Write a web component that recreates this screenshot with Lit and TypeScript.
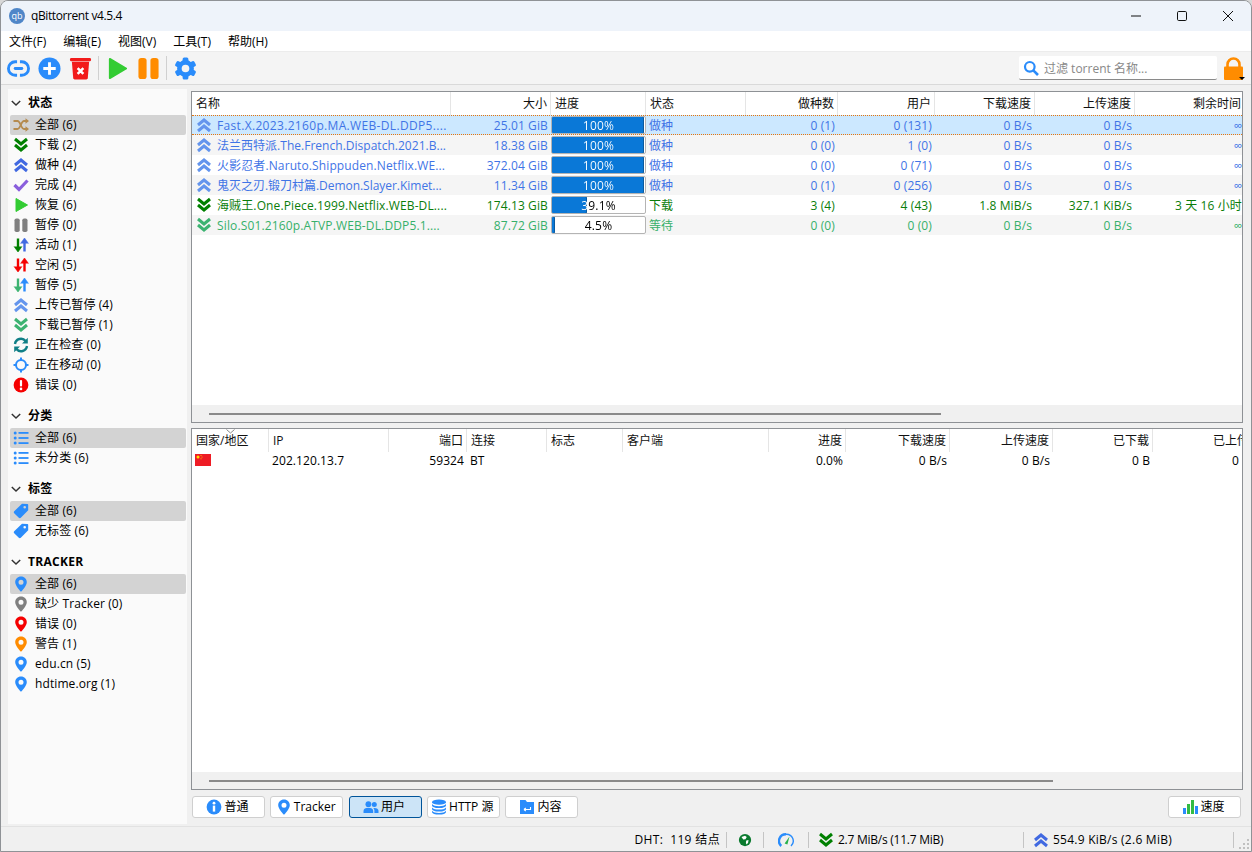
import { LitElement, html, css, svg } from "lit";
import { customElement } from "lit/decorators.js";

const B = "#2a8cfb", RB = "#4169e1", CB = "#6495ed", G = "#008000", MG = "#3cb371", R = "#f50000", O = "#ff8c00";

function ic(body: any, size = 16, vb = 16) {
  return html`<svg class="ic" width=${size} height=${size} viewBox="0 0 ${vb} ${vb}">${body}</svg>`;
}
const chev = (c: string, up: boolean) => up
  ? svg`<path d="M2 8 8 3 14 8M2 14 8 9 14 14" fill="none" stroke=${c} stroke-width="3"/>`
  : svg`<path d="M2 2 8 7 14 2M2 8 8 13 14 8" fill="none" stroke=${c} stroke-width="3"/>`;
const arrows = (d: string, u: string) => svg`
  <path d="M5 1.5V13" stroke=${d} stroke-width="2.4" fill="none"/><path d="M1 9.5 5 15 9 9.5" fill=${d} stroke=${d} stroke-width=".6"/>
  <path d="M11.5 14.5V3" stroke=${u} stroke-width="2.4" fill="none"/><path d="M7.5 6.5 11.5 1 15.5 6.5" fill=${u} stroke=${u} stroke-width=".6"/>`;
const pin = (c: string) => svg`<path fill-rule="evenodd" fill=${c} d="M8 .5C4.6.5 2.2 3 2.2 6.2 2.2 10 8 15.8 8 15.8S13.8 10 13.8 6.2C13.8 3 11.4.5 8 .5ZM8 3.7A2.5 2.5 0 1 1 8 8.7 2.5 2.5 0 0 1 8 3.7Z"/>`;
const list = svg`<g fill=${B}><circle cx="2.2" cy="3" r="1.5"/><circle cx="2.2" cy="8" r="1.5"/><circle cx="2.2" cy="13" r="1.5"/><rect x="5.5" y="2" width="10" height="1.8"/><rect x="5.5" y="7.1" width="10" height="1.8"/><rect x="5.5" y="12.2" width="10" height="1.8"/></g>`;
const tag = svg`<path fill-rule="evenodd" fill=${B} d="M9 .8 14.2.9C14.8.9 15.2 1.3 15.2 1.9L15.2 7.2 7.8 14.8C7.2 15.4 6.4 15.4 5.8 14.8L1.2 10.2C.6 9.6.6 8.8 1.2 8.2ZM11.7 3A1.3 1.3 0 1 0 11.7 5.6 1.3 1.3 0 0 0 11.7 3Z"/>`;

const icons: Record<string, any> = {
  all: svg`<g fill="none" stroke="#b58b4f" stroke-width="1.8"><path d="M.5 4H4.5C7.5 4 8 12 11 12H13.5"/><path d="M.5 12H4.5C7.5 12 8 4 11 4H13.5"/></g><path fill="#b58b4f" d="M12.5 1.3 16 4 12.5 6.7ZM12.5 9.3 16 12 12.5 14.7Z"/>`,
  dlG: chev(G, false), upR: chev(RB, true), upC: chev(CB, true), dlM: chev(MG, false),
  check: svg`<path d="M1.5 8 6 12.5 14.5 3.5" fill="none" stroke="#8a5fdc" stroke-width="3.2"/>`,
  play: svg`<path d="M3 1.5 14.5 8 3 14.5Z" fill="#33cc33" stroke="#33cc33" stroke-linejoin="round"/>`,
  pause: svg`<rect x="1.5" y="1.5" width="5.2" height="13.5" rx="1.8" fill="#808080"/><rect x="9.3" y="1.5" width="5.2" height="13.5" rx="1.8" fill="#808080"/>`,
  act: arrows(G, RB), idle: arrows(R, R), stall: arrows(MG, B),
  check2: svg`<g fill="none" stroke="#0f7f86" stroke-width="2.4"><path d="M2 7A6 6 0 0 1 12.6 4"/><path d="M14 9A6 6 0 0 1 3.4 12"/></g><path fill="#0f7f86" d="M14.8 .8V6.6H9ZM1.2 15.2V9.4H7Z"/>`,
  move: svg`<circle cx="8" cy="8" r="5" fill="none" stroke=${B} stroke-width="2"/><path d="M8 .5V3M8 13V15.5M.5 8H3M13 8H15.5" stroke=${B} stroke-width="2"/>`,
  err: svg`<circle cx="8" cy="8" r="7.4" fill=${R}/><rect x="6.9" y="3" width="2.2" height="6.6" rx="1" fill="#fff"/><circle cx="8" cy="11.9" r="1.3" fill="#fff"/>`,
  list, tag,
  pinB: pin(B), pinGr: pin("#808080"), pinR: pin(R), pinO: pin(O),
  info: svg`<circle cx="8" cy="8" r="7.4" fill=${B}/><rect x="6.8" y="6.6" width="2.4" height="6" fill="#fff"/><circle cx="8" cy="4.2" r="1.4" fill="#fff"/>`,
  users: svg`<g fill=${B}><circle cx="5.4" cy="5.2" r="2.9"/><circle cx="11.3" cy="5.4" r="2.5"/><path d="M.5 14V12C.5 9.9 2.6 8.8 5.4 8.8 8.2 8.8 10.2 9.9 10.2 12V14Z"/><path d="M11.4 14V11.6C11.4 10.6 11 9.7 10.3 9 13.4 8.6 15.5 9.9 15.5 11.8V14Z"/></g>`,
  db: svg`<g fill=${B}><ellipse cx="8" cy="3.2" rx="7" ry="2.6"/><path d="M1 5V6.5C1 8 4.1 9.1 8 9.1S15 8 15 6.5V5C14 6.6 11 7.2 8 7.2S2 6.6 1 5Z"/><path d="M1 8.4V9.9C1 11.4 4.1 12.5 8 12.5S15 11.4 15 9.9V8.4C14 10 11 10.6 8 10.6S2 10 1 8.4Z"/><path d="M1 11.8V12.9C1 14.4 4.1 15.6 8 15.6S15 14.4 15 12.9V11.8C14 13.4 11 14 8 14S2 13.4 1 11.8Z"/></g>`,
  folder: svg`<path fill=${B} d="M1 1H6.5L8 3H15V15H1Z"/><path d="M5 10.5H11.5V8M5 10.5 6.8 9M5 10.5 6.8 12" fill="none" stroke="#fff" stroke-width="1.1"/>`,
  bars: svg`<rect x="1" y="9" width="3" height="6" fill=${B}/><rect x="5" y="5" width="3" height="10" fill="#33bb44"/><rect x="9" y="1" width="3" height="14" fill="#33bb44"/><rect x="13" y="7" width="3" height="8" fill=${B}/>`,
  globe: svg`<circle cx="8" cy="8" r="7" fill="#0a7a2e"/><path fill="#fff" d="M4 4.5 8 3 10 4.5 8.5 7 6 7.5ZM9.5 8.5 12 8 11.5 11.5 9.5 13 9 10.5Z"/>`,
  gauge: svg`<path d="M3.2 14A6.8 6.8 0 0 1 8 2.2" fill="none" stroke=${B} stroke-width="2.4"/><path d="M8 2.2A6.8 6.8 0 0 1 13 14" fill="none" stroke=${B} stroke-width="1.4"/><path d="M6.6 11.5 11.5 4.5 9.4 12.6Z" fill="#27b04a"/>`,
};

const groups = [
  { title: "状态", sel: 0, items: [["all","全部 (6)"],["dlG","下载 (2)"],["upR","做种 (4)"],["check","完成 (4)"],["play","恢复 (6)"],["pause","暂停 (0)"],["act","活动 (1)"],["idle","空闲 (5)"],["stall","暂停 (5)"],["upC","上传已暂停 (4)"],["dlM","下载已暂停 (1)"],["check2","正在检查 (0)"],["move","正在移动 (0)"],["err","错误 (0)"]] },
  { title: "分类", sel: 0, items: [["list","全部 (6)"],["list","未分类 (6)"]] },
  { title: "标签", sel: 0, items: [["tag","全部 (6)"],["tag","无标签 (6)"]] },
  { title: "TRACKER", sel: 0, items: [["pinB","全部 (6)"],["pinGr","缺少 Tracker (0)"],["pinR","错误 (0)"],["pinO","警告 (1)"],["pinB","edu.cn (5)"],["pinB","hdtime.org (1)"]] },
];

const topCols = [["名称",0],["大小",1],["进度",0],["状态",0],["做种数",1],["用户",1],["下载速度",1],["上传速度",1],["剩余时间",1]] as [string, number][];
const peerCols = [["国家/地区",0],["IP",0],["端口",1],["连接",0],["标志",0],["客户端",0],["进度",1],["下载速度",1],["上传速度",1],["已下载",1],["已上传",1]] as [string, number][];

const rows = [
  ["upC","seed","Fast.X.2023.2160p.MA.WEB-DL.DDP5....","25.01 GiB",100,"做种","0 (1)","0 (131)","0 B/s","0 B/s","∞",0.33],
  ["upC","seed","法兰西特派.The.French.Dispatch.2021.B...","18.38 GiB",100,"做种","0 (0)","1 (0)","0 B/s","0 B/s","∞",0.02],
  ["upC","seed","火影忍者.Naruto.Shippuden.Netflix.WE...","372.04 GiB",100,"做种","0 (0)","0 (71)","0 B/s","0 B/s","∞",0.11],
  ["upC","seed","鬼灭之刃.锻刀村篇.Demon.Slayer.Kimet...","11.34 GiB",100,"做种","0 (1)","0 (256)","0 B/s","0 B/s","∞",-0.03],
  ["dlG","dl","海贼王.One.Piece.1999.Netflix.WEB-DL....","174.13 GiB",39.1,"下载","3 (4)","4 (43)","1.8 MiB/s","327.1 KiB/s","3 天 16 小时",0.12],
  ["dlM","wait","Silo.S01.2160p.ATVP.WEB-DL.DDP5.1....","87.72 GiB",4.5,"等待","0 (0)","0 (0)","0 B/s","0 B/s","∞",0.14],
] as any[];

const tabs = [["info","普通"],["pinB","Tracker"],["users","用户"],["db","HTTP 源"],["folder","内容"]];

@customElement("app-root")
export class AppRoot extends LitElement {
  static styles = css`
    :host { display: block; width: 1252px; height: 852px; background: #d8d8d8; overflow: hidden;
      font: 12px/16px "Open Sans", "Noto Sans CJK SC", sans-serif; color: #000; }
    svg.ic { display: block; flex: none; }
    .win { box-sizing: border-box; width: 1252px; height: 852px; display: flex; flex-direction: column;
      border: 1px solid #8f9296; border-radius: 8px 8px 0 0; overflow: hidden; background: #f0f0f0; }
    .title { height: 30px; flex: none; background: #eef3fa; display: flex; align-items: center; padding-left: 8px; letter-spacing: -0.4px; }
    .logo { width: 16px; height: 16px; border-radius: 50%; background: #4f86c8; color: #fff; font-size: 9px; line-height: 15px; text-align: center; margin-right: 6px; letter-spacing: 0; }
    .wc { margin-left: auto; display: flex; }
    .wc div { width: 46px; height: 30px; display: flex; align-items: center; justify-content: center; }
    .menu { flex: none; background: #fff; display: flex; align-items: center; padding-left: 8px; border-bottom: 1px solid #ececec; box-sizing: border-box; height: 21px; }
    .menu span { margin: 2px 17px 0 0; }
    .tool { height: 33px; flex: none; box-sizing: border-box; display: flex; align-items: center; padding: 0 8px 0 6px; background: #f4f4f4; border-bottom: 1px solid #d9d9d9; }
    .tool .t { width: 23px; height: 23px; margin-right: 8px; flex: none; }
    .tool .sep { width: 1px; height: 24px; background: #d0d0d0; margin: 0 7px 0 -2px; }
    .search { margin-left: auto; width: 198px; height: 24px; box-sizing: border-box; background: #fff; border-bottom: 1px solid #8a8a8a; border-radius: 2px; display: flex; align-items: center; gap: 5px; padding-left: 4px; color: #888; }
    .search span { margin-top: 2px; }
    .lock { position: relative; margin-left: 7px; width: 19px; height: 23px; }
    .lock i { position: absolute; right: -2px; bottom: 0; border: 3px solid transparent; border-top: 3px solid #000; border-bottom: 0; }
    .main { flex: 1; display: flex; min-height: 0; padding: 4px 8px 2px 7px; gap: 4px; border-bottom: 1px solid #e2e2e2; }
    .side { width: 179px; flex: none; background: #fafafa; box-sizing: border-box; padding: 3px 1px 0 2px; letter-spacing: 0.1px; }
    .ghead { height: 22px; display: flex; align-items: center; margin-bottom: 1px; font-weight: 700; padding-left: 1px; gap: 7px; letter-spacing: 0.3px; }
    .group { margin-bottom: 10px; }
    .item { height: 20px; display: flex; align-items: center; gap: 6px; padding-left: 3px; border-radius: 2px; }
    .item.sel { background: #d3d3d3; }
    .right { flex: 1; min-width: 0; display: flex; flex-direction: column; padding-top: 2px; }
    .panel { border: 1px solid #8e9195; background: #fff; display: flex; flex-direction: column; overflow: hidden; }
    .panel.top { height: 330px; flex: none; margin-bottom: 5px; }
    .panel.bot { flex: 1; min-height: 0; }
    .rowsbox { flex: 1; overflow: hidden; min-height: 0; }
    .g { display: grid; white-space: nowrap; }
    .g.torrent { grid-template-columns: 259px 100px 95px 100px 92px 97px 100px 100px 110px; }
    .g.peer { grid-template-columns: 77px 120px 78px 80px 76px 146px 77px 104px 103px 100px 100px; }
    .hd { height: 23px; }
    .hd > div { position: relative; display: flex; align-items: center; padding: 0 3px; border-right: 1px solid #e5e5e5; color: #111; overflow: hidden; min-width: 0; box-sizing: border-box; }
    .hd > div.r { justify-content: flex-end; }
    .hd > div.l { padding-left: 4px; }
    .sort { position: absolute; left: 34px; top: 0; }
    .row { height: 20px; line-height: 22px; box-sizing: border-box; letter-spacing: 0.12px; }
    .row > div { padding: 0 3px; overflow: hidden; min-width: 0; box-sizing: border-box; }
    .row > div.r { text-align: right; }
    .row:nth-child(even) { background: #f5f5f5; }
    .row.focus { background: #cce8ff; border-top: 1px dotted #e8760c; border-bottom: 1px dotted #e8760c; line-height: 20px; }
    .row.seed { color: #3f74e6; }
    .row.dl { color: #0a7d0a; }
    .row.wait { color: #35b06a; }
    .peer.row { height: 18px; line-height: 18px; letter-spacing: 0.08px; }
    .name { display: flex; align-items: center; gap: 5px; padding-left: 4px !important; }
    .name span { margin-top: 2px; line-height: 16px; }
    .barcell { padding: 0 !important; display: flex; align-items: center; }
    .bar { position: relative; width: 95px; height: 18px; box-sizing: border-box; border: 1px solid #b4b4b4; border-radius: 2px; background: #fff; overflow: hidden; }
    .fill { position: absolute; left: -1px; top: -1px; bottom: -1px; box-sizing: border-box; background: #0a78d7; border: 1px solid #0a5a9f; border-radius: 2px; }
    .lbl { position: relative; display: block; height: 16px; line-height: 17px; text-align: center; color: transparent; -webkit-background-clip: text; background-clip: text; letter-spacing: 0.2px; }
    .scroll { height: 17px; flex: none; background: #f0f0f0; display: flex; align-items: center; padding: 0 0 0 17px; }
    .thumb { height: 2px; background: #8a8a8a; margin-top: 1px; }
    .tabs { height: 22px; margin: 6px 2px 6px 1px; flex: none; display: flex; gap: 5.25px; }
    .tab { width: 73px; box-sizing: border-box; background: #fff; border: 1px solid #cfcfcf; border-radius: 3px; display: flex; align-items: center; justify-content: center; gap: 2px; padding-right: 2px; }
    .tab.on { background: #cce4f7; border-color: #005499; }
    .tab.sp { margin-left: auto; }
    .flag { display: block; margin-top: 2px; }
    .status { height: 24px; flex: none; box-sizing: border-box; padding-top: 2px; display: flex; align-items: center; background: #f0f0f0; }
    .status .s { height: 16px; display: flex; align-items: center; box-sizing: border-box; gap: 4px; }
    .status .b { border-left: 1px solid #c4c4c4; }
    .s.dht { width: 725px; justify-content: flex-end; padding-right: 6px; letter-spacing: 0.35px; }
    .s.w37 { width: 37px; justify-content: center; }
    .s.w45 { width: 45px; justify-content: center; }
    .s.dn { width: 215px; padding-left: 9px; letter-spacing: -0.25px; }
    .s.up { width: 210px; padding-left: 9px; letter-spacing: 0.25px; }
    .grip { margin: auto 1px 1px auto; display: block; }
  `;

  render() {
    return html`<div class="win">
      <div class="title">
        <div class="logo">qb</div><span>qBittorrent v4.5.4</span>
        <div class="wc">
          <div><svg width="12" height="12" viewBox="0 0 12 12"><path d="M1 6H11" stroke="#111"/></svg></div>
          <div><svg width="12" height="12" viewBox="0 0 12 12"><rect x="1.5" y="1.5" width="9" height="9" rx="1.2" fill="none" stroke="#111"/></svg></div>
          <div><svg width="12" height="12" viewBox="0 0 12 12"><path d="M1 1 11 11M11 1 1 11" stroke="#111"/></svg></div>
        </div>
      </div>
      <div class="menu"><span>文件(F)</span><span>编辑(E)</span><span>视图(V)</span><span>工具(T)</span><span>帮助(H)</span></div>
      <div class="tool">
        <svg class="t" viewBox="0 0 24 24"><g fill="none" stroke=${B} stroke-width="3"><path d="M10.5 5H8.5A7 7 0 0 0 8.5 19H10.5"/><path d="M13.5 5H15.5A7 7 0 0 1 15.5 19H13.5"/></g><rect x="7" y="10.5" width="10" height="3" rx="1.5" fill=${B}/></svg>
        <svg class="t" viewBox="0 0 24 24"><circle cx="12" cy="12" r="11.5" fill=${B}/><path d="M12 5.5V18.5M5.5 12H18.5" stroke="#fff" stroke-width="3"/></svg>
        <svg class="t" viewBox="0 0 24 24"><rect x="1" y="1" width="22" height="3.4" rx="1.4" fill="#f21b1b"/><path fill="#f21b1b" d="M3 5H21L19.6 22C19.5 23 19 23.5 18 23.5H6C5 23.5 4.5 23 4.4 22Z"/><path d="M9 11.5 15 17.5M15 11.5 9 17.5" stroke="#fff" stroke-width="2.6"/></svg>
        <div class="sep"></div>
        <svg class="t" viewBox="0 0 24 24"><path d="M4 2 21 12 4 22Z" fill="#33cc33" stroke="#33cc33" stroke-width="2" stroke-linejoin="round"/></svg>
        <svg class="t" viewBox="0 0 24 24"><rect x="1.5" y="1" width="8.5" height="22" rx="3" fill=${O}/><rect x="14" y="1" width="8.5" height="22" rx="3" fill=${O}/></svg>
        <div class="sep"></div>
        <svg class="t" viewBox="0 0 24 24">
          <g fill=${B}>${[0, 60, 120, 180, 240, 300].map(a => svg`<rect x="9" y="0.5" width="6" height="6.5" rx="1.6" transform="rotate(${a} 12 12)"/>`)}</g>
          <circle cx="12" cy="12" r="6.4" fill="none" stroke=${B} stroke-width="4.8"/>
        </svg>
        <div class="search">
          <svg width="16" height="16" viewBox="0 0 16 16"><circle cx="6.8" cy="6.8" r="4.8" fill="none" stroke=${B} stroke-width="2.2"/><path d="M10.3 10.3 15 15" stroke=${B} stroke-width="2.6"/></svg>
          <span>过滤 torrent 名称...</span>
        </div>
        <div class="lock">
          <svg width="19" height="23" viewBox="0 0 19 23"><path d="M3.5 11V7.5A6 6 0 0 1 15.5 7.5V11" fill="none" stroke=${O} stroke-width="2.6"/><rect x="0" y="9.5" width="19" height="13.5" rx="1" fill=${O}/></svg>
          <i></i>
        </div>
      </div>
      <div class="main">
        <div class="side">
          ${groups.map(g => html`<div class="group">
            <div class="ghead"><svg width="10" height="10" viewBox="0 0 10 10"><path d="M.8 3 5 7 9.2 3" fill="none" stroke="#333" stroke-width="1.5"/></svg><span>${g.title}</span></div>
            ${g.items.map((it, i) => html`<div class="item ${i === g.sel ? "sel" : ""}">${ic(icons[it[0]])}<span>${it[1]}</span></div>`)}
          </div>`)}
        </div>
        <div class="right">
          <div class="panel top">
            <div class="g torrent hd">${topCols.map(c => html`<div class=${c[1] ? "r" : "l"}>${c[0]}</div>`)}</div>
            <div class="rowsbox">
              ${rows.map((r, i) => html`<div class="g torrent row ${r[1]} ${i === 0 ? "focus" : ""}">
                <div class="name">${ic(icons[r[0]])}<span style="letter-spacing:${r[11]}px">${r[2]}</span></div>
                <div class="r">${r[3]}</div>
                <div class="barcell"><div class="bar"><div class="fill" style="width:${r[4]}%"></div><span class="lbl" style="background-image:linear-gradient(90deg,#fff ${r[4]}%,#000 ${r[4]}%)">${r[4]}%</span></div></div>
                <div>${r[5]}</div><div class="r">${r[6]}</div><div class="r">${r[7]}</div><div class="r">${r[8]}</div><div class="r">${r[9]}</div><div class="r">${r[10]}</div>
              </div>`)}
            </div>
            <div class="scroll"><div class="thumb" style="width:732px"></div></div>
          </div>
          <div class="panel bot">
            <div class="g peer hd">${peerCols.map((c, i) => html`<div class=${c[1] ? "r" : "l"}>${i === 0 ? html`<svg class="sort" width="9" height="5" viewBox="0 0 9 5"><path d="M.5.5 4.5 4 8.5.5" fill="none" stroke="#888"/></svg>` : ""}${c[0]}</div>`)}</div>
            <div class="rowsbox">
              <div class="g peer row">
                <div><svg class="flag" width="16" height="12" viewBox="0 0 16 12"><rect width="16" height="12" fill="#ee1c25"/><circle cx="3" cy="3" r="1.5" fill="#ffde00"/><circle cx="6" cy="1.6" r=".5" fill="#ffde00"/><circle cx="7" cy="3" r=".5" fill="#ffde00"/><circle cx="6" cy="4.8" r=".5" fill="#ffde00"/></svg></div>
                <div>202.120.13.7</div><div class="r">59324</div><div>BT</div><div></div><div></div>
                <div class="r">0.0%</div><div class="r">0 B/s</div><div class="r">0 B/s</div><div class="r">0 B</div><div class="r">0 B</div>
              </div>
            </div>
            <div class="scroll"><div class="thumb" style="width:844px"></div></div>
          </div>
          <div class="tabs">
            ${tabs.map((t, i) => html`<div class="tab ${i === 2 ? "on" : ""}">${ic(icons[t[0]])}<span>${t[1]}</span></div>`)}
            <div class="tab sp">${ic(icons.bars)}<span>速度</span></div>
          </div>
        </div>
      </div>
      <div class="status">
        <div class="s dht">DHT:&nbsp;&nbsp;119 结点</div>
        <div class="s b w37">${ic(icons.globe, 14)}</div>
        <div class="s b w45">${ic(icons.gauge)}</div>
        <div class="s b dn">${ic(icons.dlG)}<span>2.7 MiB/s (11.7 MiB)</span></div>
        <div class="s b up">${ic(icons.upR)}<span>554.9 KiB/s (2.6 MiB)</span></div>
        <div class="s b"></div>
        <svg class="grip" width="11" height="11" viewBox="0 0 11 11"><g fill="#c0c0c0"><rect x="8" y="0" width="2" height="2"/><rect x="4" y="4" width="2" height="2"/><rect x="8" y="4" width="2" height="2"/><rect x="0" y="8" width="2" height="2"/><rect x="4" y="8" width="2" height="2"/><rect x="8" y="8" width="2" height="2"/></g></svg>
      </div>
    </div>`;
  }
}
